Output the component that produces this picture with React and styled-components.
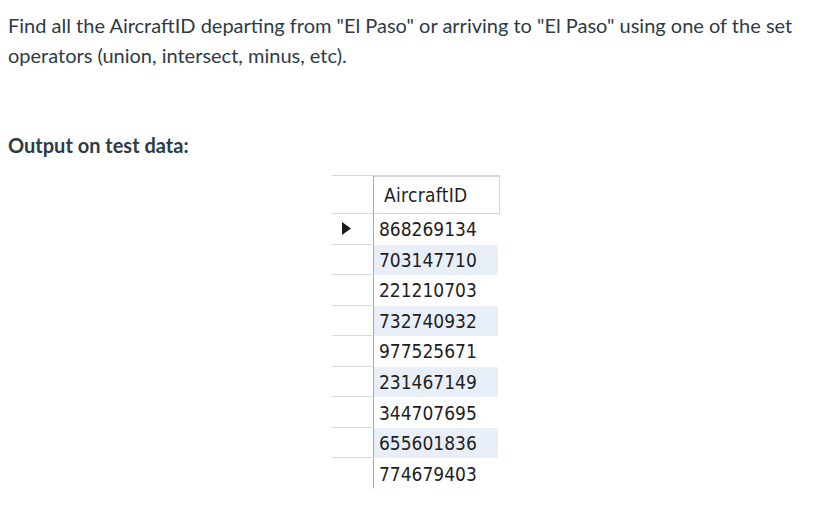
import React from 'react'
import styled, { createGlobalStyle } from 'styled-components'

const GlobalStyle = createGlobalStyle`
  body {
    margin: 0;
    background: #fff;
    font-family: Lato, "Open Sans", sans-serif;
    color: #2d3b45;
  }
`

const Page = styled.div`
  padding: 0 8px;
`

const Question = styled.p`
  margin: 10px 0 0;
  font-size: 20px;
  line-height: 30px;
`

const OutputLabel = styled.h3`
  margin: 60px 0 0;
  font-size: 20px;
  line-height: 30px;
  font-weight: 700;
`

const Grid = styled.div`
  margin: 15px 0 0 324px;
  width: 168px;
  display: grid;
  grid-template-columns: 42px 126px;
  grid-template-rows: 38px repeat(9, 30.55px);
  border-top: 1px solid #d6d6d6;
  font-family: "DejaVu Sans Condensed", "DejaVu Sans", sans-serif;
  font-size: 19px;
  color: #1e1e1e;
`

const Gutter = styled.div`
  border-right: 1px solid #a9a9a9;
  border-bottom: 1px solid ${p => (p.$last ? '#ffffff' : '#dcdcdc')};
  display: flex;
  align-items: center;
  padding-left: 10px;
`

const HeaderCell = styled.div`
  border: 1px solid #d6d6d6;
  border-left: none;
  display: flex;
  align-items: center;
  padding-left: 10px;
  letter-spacing: 0.3px;
`

const Cell = styled.div`
  display: flex;
  align-items: center;
  padding-left: 5px;
  margin-right: 2px;
  background: ${p => (p.$alt ? '#e9eff9' : '#ffffff')};
`

const Arrow = styled.svg`
  width: 9px;
  height: 13px;
  display: block;
`

const ids = [
  '868269134',
  '703147710',
  '221210703',
  '732740932',
  '977525671',
  '231467149',
  '344707695',
  '655601836',
  '774679403',
]

export default function App() {
  return (
    <Page>
      <GlobalStyle />
      <Question>
        Find all the AircraftID departing from "El Paso" or arriving to "El Paso" using one of the set
        operators (union, intersect, minus, etc).
      </Question>
      <OutputLabel>Output on test data:</OutputLabel>
      <Grid>
        <Gutter />
        <HeaderCell>AircraftID</HeaderCell>
        {ids.map((id, i) => (
          <React.Fragment key={id}>
            <Gutter $last={i === ids.length - 1}>
              {i === 0 && (
                <Arrow viewBox="0 0 9 13">
                  <path d="M0 0 L9 6.5 L0 13 Z" fill="#1a1a1a" />
                </Arrow>
              )}
            </Gutter>
            <Cell $alt={i % 2 === 1}>{id}</Cell>
          </React.Fragment>
        ))}
      </Grid>
    </Page>
  )
}
